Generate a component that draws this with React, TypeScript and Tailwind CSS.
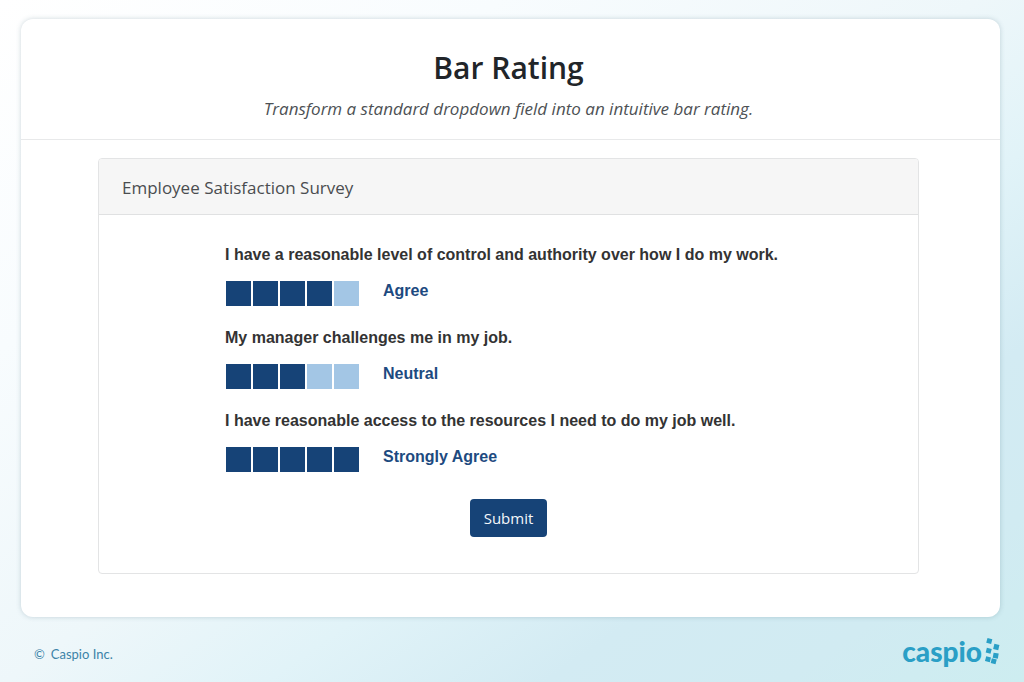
import { useState } from "react";

const LEVELS = ["Strongly Disagree", "Disagree", "Neutral", "Agree", "Strongly Agree"];

const QUESTIONS = [
  { id: "control", text: "I have a reasonable level of control and authority over how I do my work.", rating: 4 },
  { id: "manager", text: "My manager challenges me in my job.", rating: 3 },
  { id: "resources", text: "I have reasonable access to the resources I need to do my job well.", rating: 5 },
];

function BarRating({ id, text, initial }: { id: string; text: string; initial: number }) {
  const [rating, setRating] = useState(initial);
  return (
    <fieldset className="font-['Liberation_Sans',Arial,sans-serif] text-base leading-6 font-bold">
      <legend className="text-[#333333]">{text}</legend>
      <div className="mt-3 flex items-start gap-6">
        <div className="flex gap-0.5 pt-0.5 pl-px">
          {LEVELS.map((level, i) => (
            <input
              key={level}
              type="radio"
              name={id}
              aria-label={level}
              checked={rating === i + 1}
              onChange={() => setRating(i + 1)}
              className={
                "size-[25px] cursor-pointer appearance-none " +
                (i < rating ? "bg-[#164377]" : "bg-[#a3c6e5]")
              }
            />
          ))}
        </div>
        <output className="text-[#1d4a80]">{LEVELS[rating - 1]}</output>
      </div>
    </fieldset>
  );
}

function CaspioLogo() {
  return (
    <a href="#caspio" aria-label="Caspio" className="flex items-start text-[#2a9fc6]">
      <span className="font-['Lato',sans-serif] text-[28px] leading-8 font-black">caspio</span>
      <svg viewBox="0 0 16 30" className="ml-0.5 h-[30px] w-4" fill="currentColor" aria-hidden="true">
        <rect x="2.8" y="3.5" width="5" height="5" transform="rotate(14 5.3 6)" />
        <rect x="9.7" y="9.4" width="5.2" height="5.2" transform="rotate(14 12.3 12)" />
        <rect x="2.2" y="13.2" width="5" height="5" transform="rotate(14 4.7 15.7)" />
        <rect x="9.1" y="18.1" width="5.2" height="5.2" transform="rotate(10 11.7 20.7)" />
        <rect x="1.5" y="21.8" width="5" height="5" transform="rotate(14 4 24.3)" />
        <rect x="7.2" y="23.8" width="5" height="5" transform="rotate(14 9.7 26.3)" />
      </svg>
    </a>
  );
}

export default function App() {
  return (
    <div className="flex min-h-screen flex-col bg-[linear-gradient(145deg,#ffffff_0%,#f8fcfe_25%,#eef7fa_49%,#e1f3f8_62%,#d3ebf3_76%,#d1ebf2_88%,#cdedf0_100%)] pt-[19px] pr-6 pl-[21px] font-['Open_Sans','Noto_Sans',sans-serif]">
      <main className="rounded-xl bg-white pb-[43px] shadow-[0_0_5px_rgba(60,100,115,0.25)]">
        <header className="border-b border-[#e8e9ea] pt-[29px] pr-1 pb-[17px] text-center">
          <h1 className="text-[30px] leading-10 font-semibold text-[#212529]">Bar Rating</h1>
          <p className="mt-2 text-[17px] leading-[26px] text-[#4d5154] italic">
            Transform a standard dropdown field into an intuitive bar rating.
          </p>
        </header>
        <section className="mt-[18px] mr-[81px] ml-[77px] overflow-hidden rounded border border-[#e3e4e5]">
          <h2 className="border-b border-[#e0e1e2] bg-[#f6f6f6] px-[23px] pt-[15px] pb-3 text-[17px] leading-7 text-[#4a4d50]">
            Employee Satisfaction Survey
          </h2>
          <form className="px-[126px] pt-7 pb-9" onSubmit={(e) => e.preventDefault()}>
            <div className="flex flex-col gap-5">
              {QUESTIONS.map((q) => (
                <BarRating key={q.id} id={q.id} text={q.text} initial={q.rating} />
              ))}
            </div>
            <div className="mt-[27px] flex justify-center">
              <button
                type="submit"
                className="cursor-pointer rounded bg-[#164377] px-[14px] py-[7px] text-[15px] leading-6 text-[#f4f7fa]"
              >
                Submit
              </button>
            </div>
          </form>
        </section>
      </main>
      <footer className="flex items-start justify-between pt-[18px] pl-[13px]">
        <p className="flex gap-1.5 pt-[9px] font-['Lato',sans-serif] text-[13px] leading-5 text-[#3c83a8]">
          <span>©</span>
          <span>Caspio Inc.</span>
        </p>
        <CaspioLogo />
      </footer>
    </div>
  );
}
